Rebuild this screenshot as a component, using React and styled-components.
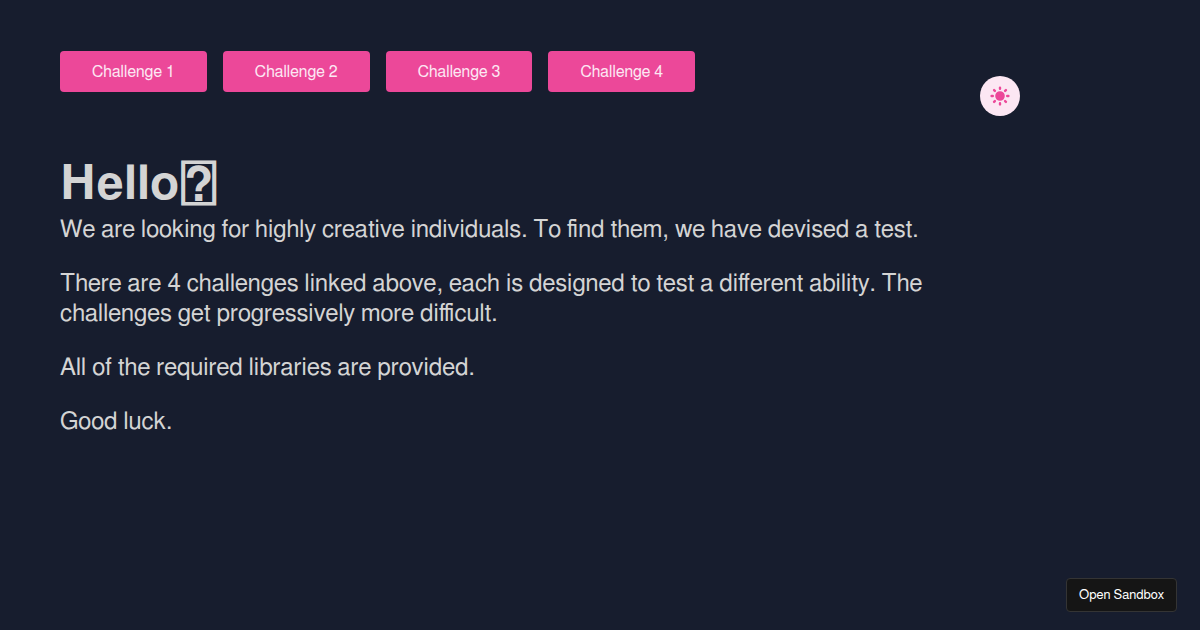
import { HiSun } from 'react-icons/hi';
import styled, { createGlobalStyle } from 'styled-components';

const GlobalStyle = createGlobalStyle`
    * {
        box-sizing: border-box;
    }

    body {
        margin: 0;
        background: #171d2e;
        color: #d4d4d4;
        font-family: FreeSans, Helvetica, "Liberation Sans", Arial, sans-serif;
        font-kerning: none;
    }
`

const Page = styled.div`
    display: flex;
    flex-direction: column;
    min-height: 100vh;
    padding: 51px 23px 18px 60px;
`

const Header = styled.header`
    display: flex;
    justify-content: space-between;
    max-width: 960px;
    min-height: 65px;
`

const Nav = styled.nav`
    display: flex;
    align-items: flex-start;
    gap: 16px;
`

const ChallengeLink = styled.a`
    padding: 11px 32px 10px;
    border-radius: 4px;
    background: #ec4899;
    color: #fce7f3;
    font-size: 16px;
    line-height: 20px;
    text-decoration: none;
`

const ThemeToggle = styled.button`
    display: flex;
    align-items: center;
    justify-content: center;
    align-self: flex-end;
    width: 40px;
    height: 40px;
    padding: 0;
    border: none;
    border-radius: 50%;
    background: #fce7f3;
    color: #ec4899;
    cursor: pointer;
`

const Main = styled.main`
    flex: 1;
    max-width: 900px;
    padding-top: 39px;

    h1 {
        margin: 0;
        font-size: 48px;
        line-height: 60px;
    }

    p {
        margin: 0 0 24px;
        font-size: 24px;
        line-height: 30px;
    }
`

const SandboxButton = styled.button`
    align-self: flex-end;
    padding: 9px 12px 8px;
    border: 1px solid #343434;
    border-radius: 4px;
    background: #151515;
    color: #fff;
    font-family: inherit;
    font-kerning: inherit;
    font-size: 13px;
    line-height: 15px;
    cursor: pointer;
`

const challenges = [1, 2, 3, 4];

// unassigned code point, shown as the font's missing-glyph box
const missingGlyph = '\u{10FFF0}';

function App() {
    return (
        <Page>
            <GlobalStyle />
            <Header>
                <Nav>
                    {challenges.map((number) => (
                        <ChallengeLink key={number} href={`#challenge-${number}`}>
                            Challenge {number}
                        </ChallengeLink>
                    ))}
                </Nav>
                <ThemeToggle type="button" aria-label="Toggle theme">
                    <HiSun size={24} />
                </ThemeToggle>
            </Header>
            <Main>
                <h1>Hello{missingGlyph}</h1>
                <p>We are looking for highly creative individuals. To find them, we have devised a test.</p>
                <p>There are 4 challenges linked above, each is designed to test a different ability. The challenges get progressively more difficult.</p>
                <p>All of the required libraries are provided.</p>
                <p>Good luck.</p>
            </Main>
            <SandboxButton type="button">Open Sandbox</SandboxButton>
        </Page>
    );
}

export default App;
